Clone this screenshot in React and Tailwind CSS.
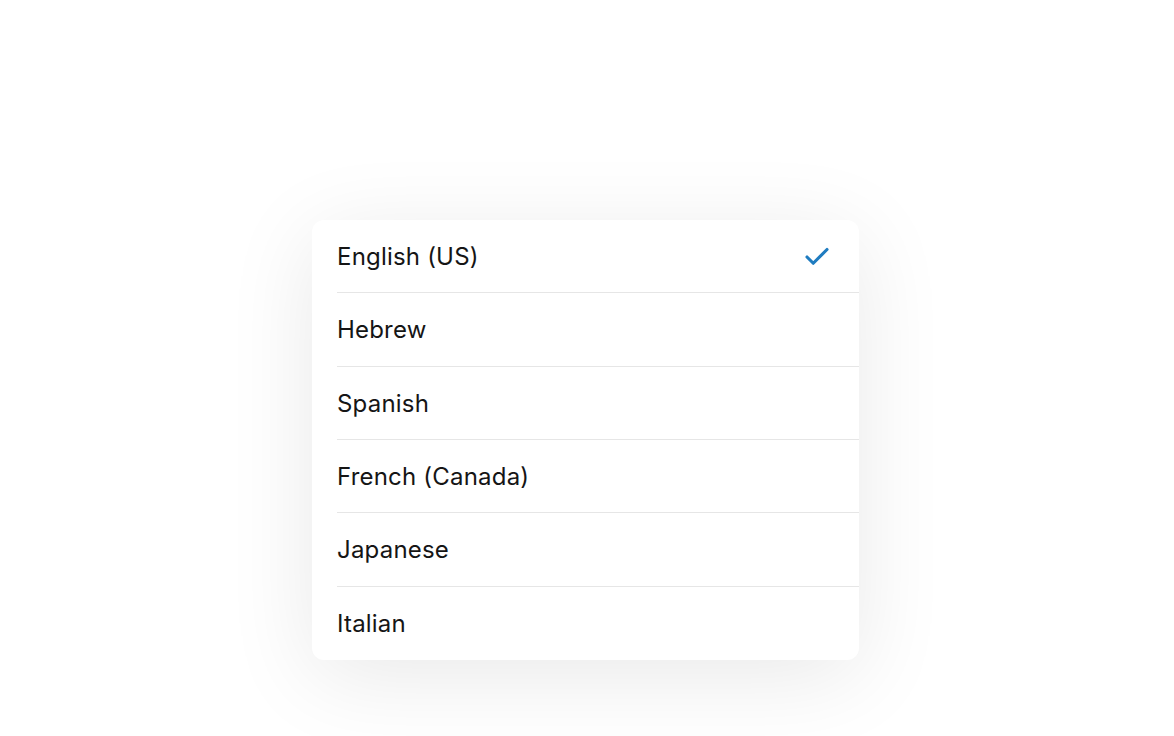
import { Check } from 'lucide-react';

const langs = ['English (US)', 'Hebrew', 'Spanish', 'French (Canada)', 'Japanese', 'Italian'];

export default function App() {
    return (
        <div className="w-full h-[736px] bg-white flex pt-[220px] pl-[312px]" style={{ fontFamily: 'Inter, "Noto Sans", sans-serif' }}>
            <div className="w-[547px] h-[440px] bg-white rounded-xl shadow-[0_16px_90px_rgba(0,0,0,0.09)] flex flex-col">
                {langs.map((l, i) => (
                    <div key={l} className="flex-1 pl-[25px]">
                        <div className={"h-full flex items-center pr-[27px] " + (i < langs.length - 1 ? 'border-b border-[#e6e6e6]' : '')}>
                            <p className="text-[24px] tracking-[0.2px] text-[#151515] flex-1 pt-[2px]">{l}</p>
                            {i === 0 && <Check className="w-[30px] h-[30px] text-[#1f7cc0] mt-[2px]" strokeWidth={2.5} />}
                        </div>
                    </div>
                ))}
            </div>
        </div>
    );
}
